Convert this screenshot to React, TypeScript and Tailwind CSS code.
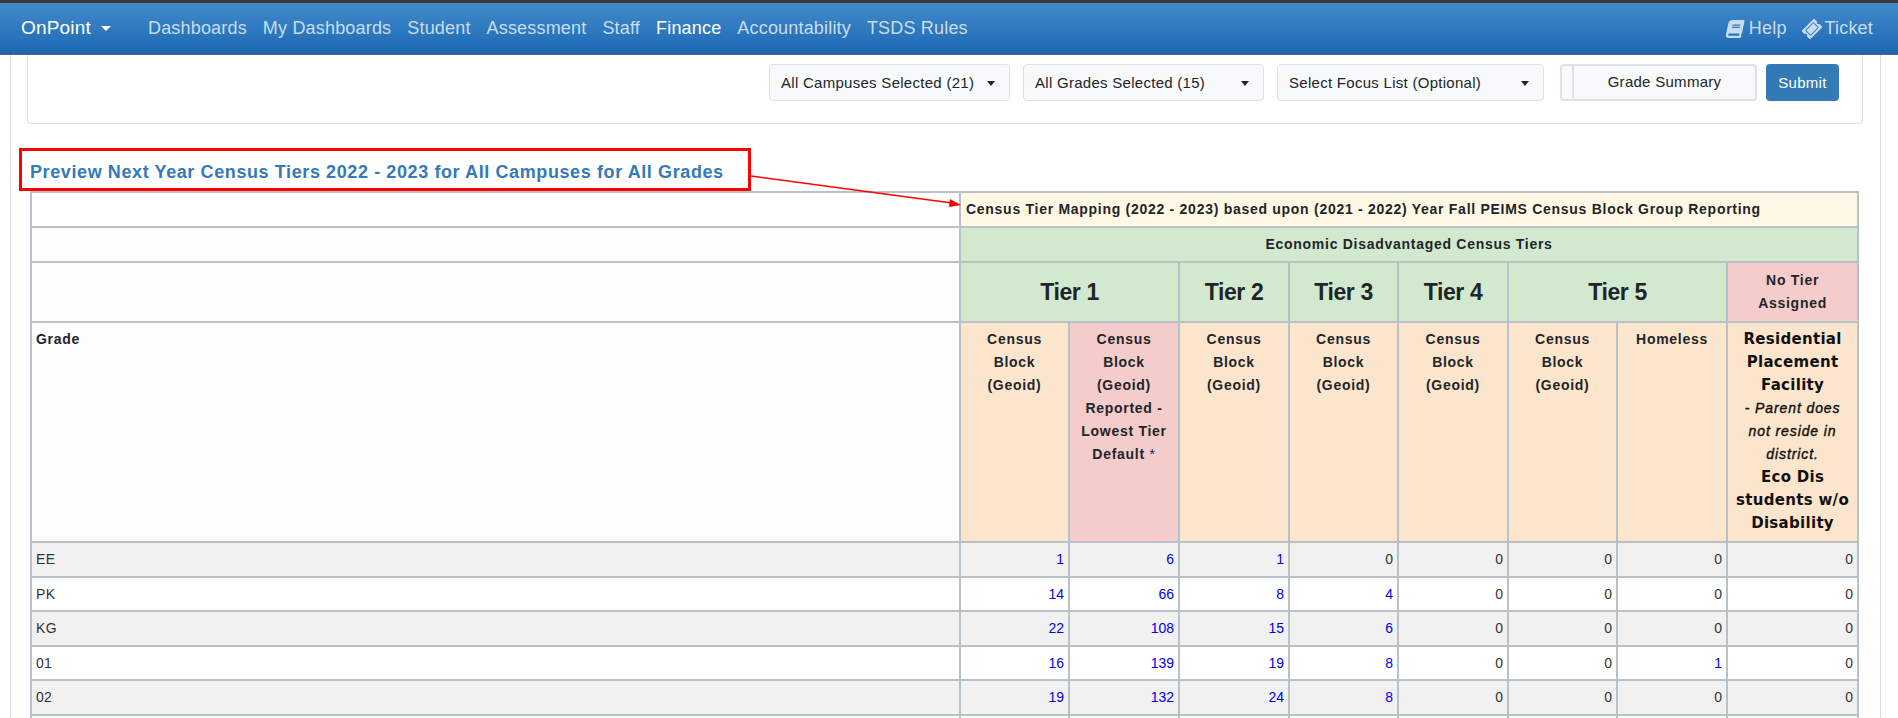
import React from 'react';
import { FaBook, FaTicketAlt } from 'react-icons/fa';

const navLinks = ['Dashboards', 'My Dashboards', 'Student', 'Assessment', 'Staff', 'Finance', 'Accountability', 'TSDS Rules'];

const rows = [
  { grade: 'EE', values: [1, 6, 1, 0, 0, 0, 0, 0] },
  { grade: 'PK', values: [14, 66, 8, 4, 0, 0, 0, 0] },
  { grade: 'KG', values: [22, 108, 15, 6, 0, 0, 0, 0] },
  { grade: '01', values: [16, 139, 19, 8, 0, 0, 1, 0] },
  { grade: '02', values: [19, 132, 24, 8, 0, 0, 0, 0] },
];

function Picker({ label, width }: { label: string; width: string }) {
  return (
    <button className={`${width} h-[37px] flex items-center justify-between pl-[11px] pr-[14px] pt-[1px] bg-[#f8f9fa] border border-[#dee2e6] rounded text-[15px] tracking-[0.28px] text-[#212529]`}>
      <span>{label}</span>
      <span className="w-0 h-0 border-x-[4.5px] border-x-transparent border-t-[5px] border-t-[#212529]"></span>
    </button>
  );
}

const th = 'border-2 border-[#b8c0c8] p-0 align-top text-center font-bold text-[14px] tracking-[0.72px] text-[#212529]';
const tier = `${th} !align-middle bg-[#d2e9d0] !text-[23px] !tracking-[-0.4px]`;

function Census({ pink }: { pink?: boolean }) {
  return (
    <th className={`${th} pt-[5px] leading-[23px] ${pink ? 'bg-[#f4cccc]' : 'bg-[#fce5cd]'}`}>
      Census<br />Block<br />(Geoid)
      {pink && <><br />Reported -<br />Lowest Tier<br />Default <span className="font-normal">*</span></>}
    </th>
  );
}

export default function App() {
  return (
    <div className="h-screen overflow-hidden bg-white font-['Liberation_Sans',Arial,sans-serif] text-[#212529] relative">
      {/* Navbar */}
      <header className="h-[55px] border-t-[3px] border-t-[#3a3a3a] border-b border-b-[#5a6570] bg-gradient-to-b from-[#428bca] to-[#1a68b3] flex items-center pl-[21px] pr-[25px] text-[18px] tracking-[0.18px]">
        <div className="flex items-center gap-[10px] text-white mr-[25px] w-[102px] text-[19px]">
          <span>OnPoint</span>
          <span className="w-0 h-0 border-x-[5px] border-x-transparent border-t-[5px] border-t-white"></span>
        </div>
        <nav className="flex gap-[16px]">
          {navLinks.map(link => (
            <a key={link} className={link === 'Finance' ? 'text-white' : 'text-[#c9dcee]'}>{link}</a>
          ))}
        </nav>
        <div className="ml-auto flex items-center gap-[16px] text-[#c9dcee]">
          <span className="flex items-center gap-[5px]"><FaBook size={18} className="-skew-x-12" />Help</span>
          <span className="flex items-center gap-[4px]"><FaTicketAlt size={18} className="-rotate-45" />Ticket</span>
        </div>
      </header>

      {/* Page body */}
      <main className="mx-[10px] w-[1871px] h-[663px] border-x border-[#dddddd] pl-[16px] pr-[17px]">
        <section className="h-[69px] border border-t-0 border-[#dddddd] rounded-b flex justify-end items-start pt-[9px] pr-[23px] gap-[13px]">
          <Picker label="All Campuses Selected (21)" width="w-[241px]" />
          <Picker label="All Grades Selected (15)" width="w-[241px]" />
          <Picker label="Select Focus List (Optional)" width="w-[267px]" />
          <div className="ml-[3px] w-[197px] h-[37px] flex bg-[#f8f9fa] border-2 border-[#dee2e6] rounded text-[15px] tracking-[0.28px]">
            <span className="w-[12px] border-r-2 border-[#dee2e6]"></span>
            <span className="flex-1 text-center leading-[32px]">Grade Summary</span>
          </div>
          <button className="-ml-[4px] w-[73px] h-[37px] pt-[1px] bg-[#337ab7] rounded text-white text-[15px] tracking-[0.28px]">Submit</button>
        </section>

        <h2 className="mt-[31px] ml-[3px] h-[34px] font-bold text-[18px] tracking-[0.6px] leading-[34px] text-[#337ab7]">
          Preview Next Year Census Tiers 2022 - 2023 for All Campuses for All Grades
        </h2>

        <table className="ml-[3px] mt-[2px] w-[1827px] table-fixed border-collapse">
          <colgroup>
            <col className="w-[929px]" />
            <col className="w-[109px]" />
            <col className="w-[110px]" />
            <col className="w-[110px]" />
            <col className="w-[109px]" />
            <col className="w-[110px]" />
            <col className="w-[109px]" />
            <col className="w-[110px]" />
            <col className="w-[131px]" />
          </colgroup>
          <thead>
            <tr className="h-[35px]">
              <th className={`${th} bg-white`}></th>
              <th colSpan={8} className={`${th} !align-middle !text-left pl-[5px] bg-[#fff8e5]`}>
                Census Tier Mapping (2022 - 2023) based upon (2021 - 2022) Year Fall PEIMS Census Block Group Reporting
              </th>
            </tr>
            <tr className="h-[35px]">
              <th className={`${th} bg-[#fdfdfd]`}></th>
              <th colSpan={8} className={`${th} !align-middle bg-[#d2e9d0]`}>Economic Disadvantaged Census Tiers</th>
            </tr>
            <tr className="h-[60px]">
              <th className={`${th} bg-[#fdfdfd]`}></th>
              <th colSpan={2} className={tier}>Tier 1</th>
              <th className={tier}>Tier 2</th>
              <th className={tier}>Tier 3</th>
              <th className={tier}>Tier 4</th>
              <th colSpan={2} className={tier}>Tier 5</th>
              <th className={`${th} !align-middle leading-[23px] bg-[#f4cccc]`}>No Tier<br />Assigned</th>
            </tr>
            <tr className="h-[220px]">
              <th className={`${th} !text-left pl-[4px] pt-[5px] leading-[23px] bg-[#fdfdfd]`}>Grade</th>
              <Census />
              <Census pink />
              <Census />
              <Census />
              <Census />
              <Census />
              <th className={`${th} pt-[5px] leading-[23px] bg-[#fce5cd]`}>Homeless</th>
              <th className={`${th} pt-[5px] leading-[23px] bg-[#fce5cd] !tracking-normal !text-[#111]`}>
                <span className="font-['DejaVu_Sans',sans-serif] text-[15px] tracking-[0.3px]">Residential<br />Placement<br />Facility</span>
                <br /><em className="font-normal tracking-[0.9px] [-webkit-text-stroke:0.4px]">- Parent does<br />not reside in<br />district.</em><br />
                <span className="font-['DejaVu_Sans',sans-serif] text-[15px] tracking-[0.3px]">Eco Dis<br />students w/o<br />Disability</span>
              </th>
            </tr>
          </thead>
          <tbody>
            {rows.map((row, i) => (
              <tr key={row.grade} className={`h-[34.5px] ${i % 2 === 0 ? 'bg-[#f1f1f1]' : 'bg-white'}`}>
                <td className="border-2 border-[#b8c0c8] pl-[4px] pt-[1px] text-[14px] tracking-[0.3px] text-[#333]">{row.grade}</td>
                {row.values.map((v, j) => (
                  <td key={j} className={`border-2 border-[#b8c0c8] pr-[4px] pt-[1px] text-right text-[14px] ${v > 0 ? 'text-[#0000ee]' : 'text-[#333]'}`}>{v}</td>
                ))}
              </tr>
            ))}
            {/* next row is cut off by the window, only its borders show */}
            <tr className="h-[34.5px] bg-[#ffffff]">
              {Array.from({ length: 9 }).map((_, j) => (
                <td key={j} className="border-2 border-[#b8c0c8]"></td>
              ))}
            </tr>
          </tbody>
        </table>
      </main>

      {/* Annotation drawn over the page */}
      <div className="absolute left-[19px] top-[148px] w-[732px] h-[43px] border-[3px] border-[#ff0000] pointer-events-none"></div>
      <svg className="absolute left-[745px] top-[170px] pointer-events-none" width="220" height="40" viewBox="0 0 220 40">
        <line x1="6" y1="6" x2="207" y2="33" stroke="#ff0000" strokeWidth="1.5" />
        <polygon points="216,35 205,29 204,37" fill="#ff0000" />
      </svg>
    </div>
  );
}
